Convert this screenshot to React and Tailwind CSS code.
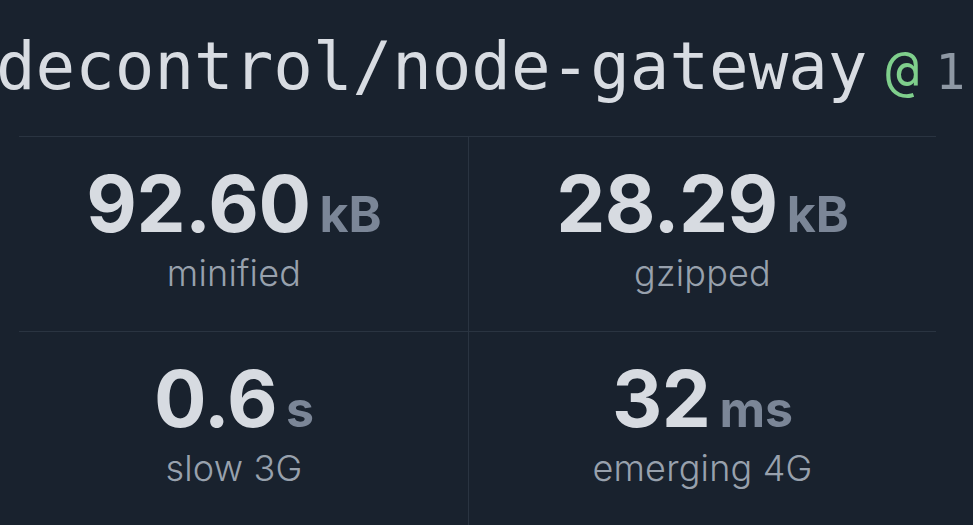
import React from "react";

const stats = [
  [
    { value: "92.60", unit: "kB", label: "minified" },
    { value: "28.29", unit: "kB", label: "gzipped" },
  ],
  [
    { value: "0.6", unit: "s", label: "slow 3G" },
    { value: "32", unit: "ms", label: "emerging 4G" },
  ],
];

function Stat({ value, unit, label, left }) {
  return (
    <div
      className={
        "flex flex-col items-center pt-[28px] " +
        (left ? "w-[469px] border-r border-[#2a3441]" : "w-[467px]")
      }
    >
      <div className="flex items-baseline leading-none">
        <span className="text-[78px] font-bold text-[#d7dbe1] tracking-[-0.5px]">{value}</span>
        <span className="ml-[9px] text-[50px] font-bold text-[#7b8697]">{unit}</span>
      </div>
      <div className="mt-[12px] text-[36px] leading-none font-light text-[#98a1ad] tracking-[0.2px]">
        {label}
      </div>
    </div>
  );
}

export default function App() {
  return (
    <div className="w-[973px] h-[525px] bg-[#19222e] overflow-hidden font-['Inter',sans-serif]">
      <div className="h-[136px] pt-[34px] whitespace-nowrap overflow-hidden font-['DejaVu_Sans_Mono',monospace] leading-none">
        <span className="ml-[-4px] text-[65.8px] text-[#d8dce2]">decontrol/node-gateway</span>
        <span className="ml-[18px] text-[56px] text-[#7fcf8c]">@</span>
        <span className="ml-[16px] text-[50px] text-[#8e98a4]">1.0.0</span>
      </div>
      <div className="ml-[19px] w-[917px] h-px bg-[#2a3441]" />
      <div className="flex h-[194px]">
        <Stat {...stats[0][0]} left />
        <Stat {...stats[0][1]} />
      </div>
      <div className="ml-[19px] w-[917px] h-px bg-[#2a3441]" />
      <div className="flex h-[194px]">
        <Stat {...stats[1][0]} left />
        <Stat {...stats[1][1]} />
      </div>
    </div>
  );
}
